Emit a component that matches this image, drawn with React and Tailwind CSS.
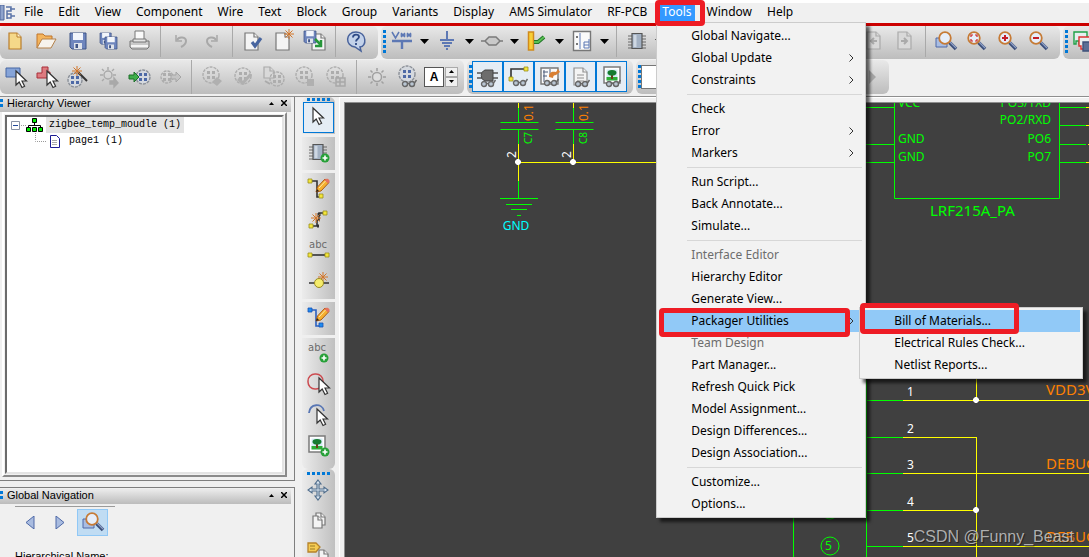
import clsx from "clsx";

const menuBar = [
  "File", "Edit", "View", "Component", "Wire", "Text", "Block", "Group", "Variants",
  "Display", "AMS Simulator", "RF-PCB", "Tools", "Window", "Help",
];

const toolsMenu = [
  [{ label: "Global Navigate..." }, { label: "Global Update", sub: true }, { label: "Constraints", sub: true }],
  [{ label: "Check" }, { label: "Error", sub: true }, { label: "Markers", sub: true }],
  [{ label: "Run Script..." }, { label: "Back Annotate..." }, { label: "Simulate..." }],
  [
    { label: "Interface Editor", disabled: true },
    { label: "Hierarchy Editor" },
    { label: "Generate View..." },
    { label: "Packager Utilities", sub: true, open: true },
    { label: "Team Design", disabled: true },
    { label: "Part Manager..." },
    { label: "Refresh Quick Pick" },
    { label: "Model Assignment..." },
    { label: "Design Differences..." },
    { label: "Design Association..." },
  ],
  [{ label: "Customize..." }, { label: "Options..." }],
];

const packagerMenu = ["Bill of Materials...", "Electrical Rules Check...", "Netlist Reports..."];

/* ---------- icon parts ---------- */

const Cursor = ({ x = 0, y = 0 }) => (
  <path
    transform={`translate(${x} ${y})`}
    d="M0 0v14l3.200-3 2.800 5.500 2.600-1.200L6 10h4.500z"
    fill="#fff"
    stroke="#333"
    strokeWidth="1.200"
  />
);

const Glasses = ({ x = 0, y = 0 }) => (
  <g transform={`translate(${x} ${y})`} fill="#b9c6d3" stroke="#666" strokeWidth="1.4">
    <circle cx="3" cy="4" r="2.500" />
    <circle cx="10" cy="4" r="2.500" />
    <path d="M5.500 3.500h2M12.500 3l2-3" fill="none" />
  </g>
);

const Plus = ({ x, y }) => (
  <g>
    <circle cx={x} cy={y} r="4.500" fill="#27a038" />
    <path d={`M${x - 2.5} ${y}h5M${x} ${y - 2.5}v5`} stroke="#fff" strokeWidth="1.600" />
  </g>
);

const Star = ({ x, y }) => (
  <path
    transform={`translate(${x} ${y})`}
    d="M0-5v10M-5 0H5M-3.500-3.500l7 7M3.500-3.500l-7 7"
    stroke="#d2762a"
    strokeWidth="1"
  />
);

const Floppy = ({ x, y, s = 1 }) => (
  <g transform={`translate(${x} ${y}) scale(${s})`}>
    <path d="M0 0h16v16H2l-2-2z" fill="#6f86bd" stroke="#3f5487" />
    <path d="M3 0h10v7H3z" fill="#f2f5fb" />
    <path d="M4 10h8v6H4z" fill="#dfe3ea" />
    <path d="M5.500 11h2.500v4H5.500z" fill="#3f5487" />
  </g>
);

const Net = ({ x = 12, y = 12, r = 8, off }) => (
  <g transform={`translate(${x} ${y})`}>
    <circle r={r} fill={off ? "none" : "#d5d9df"} stroke={off ? "#adadad" : "#8a8f97"} strokeWidth="1.400" strokeDasharray="3 1" />
    <path d="M-4-4h3v3h-3zM1-4h3v3H1zM-4 1h3v3h-3zM1 1h3v3H1z" fill={off ? "#adadad" : "#4d69a6"} />
  </g>
);

const Pencil = ({ x, y }) => (
  <g transform={`translate(${x} ${y})`}>
    <path d="M0 13l1.500-5L9 0l4 3.500L5 12z" fill="#f6b02e" stroke="#a85a16" />
    <path d="M8 1l4 3.500L13.500 3c.8-2-2-4.200-3.500-3z" fill="#e4725e" />
    <path d="M0 13l1-3 2 2z" fill="#222" />
    <path d="M3 9l6.500-7" stroke="#fde9a8" />
  </g>
);

const Tree = ({ x, y }) => (
  <g transform={`translate(${x} ${y})`}>
    <path d="M0 0h16v16H0z" fill="#fff" stroke="#7b7b7b" strokeWidth="1.500" />
    <path d="M2.500 2.500h11v11h-11z" fill="#d3ebf4" />
    <path d="M2.500 10h11v3.500h-11z" fill="#2cae36" />
    <path d="M7 7h2v5H7z" fill="#6b3f19" />
    <ellipse cx="8" cy="5.800" rx="4.500" ry="2.800" fill="#157b30" />
  </g>
);

const Chip = ({ x = 3, y = 4 }) => (
  <g transform={`translate(${x} ${y})`}>
    <path d="M0 3h18M0 6h18M0 9h18M0 12h18M0 15h18" stroke="#6a6a6a" strokeWidth="1.200" />
    <path d="M4 .5h10v15H4z" fill="#a3b1c3" stroke="#555" strokeWidth="1.200" />
    <path d="M5.500 2h3v12h-3z" fill="#dfe7f0" opacity=".7" />
  </g>
);

const Lens = ({ x = 9, y = 9, children }) => (
  <g transform={`translate(${x} ${y})`}>
    <path d="M4.500 4.500l6.500 6.500" stroke="#3c4f7a" strokeWidth="3.600" />
    <path d="M5 4l6 6" stroke="#8fa0c6" strokeWidth="1.200" />
    <circle r="5.800" fill="#e6eefa" stroke="#c67b36" strokeWidth="1.800" />
    {children}
  </g>
);

const Sheet = ({ x = 5, y = 3, w = 13, h = 17, stroke = "#777", fill = "#f4f4f4", lines }) => (
  <g transform={`translate(${x} ${y})`} fill={fill} stroke={stroke} strokeWidth="1.200">
    <path d={`M0 0H${w - 4}L${w} 4V${h}H0z`} />
    <path d={`M${w - 4} 0v4H${w}`} />
    {lines && <path d={`M3 7h${w - 6}M3 10h${w - 6}M3 13h${w - 6}`} />}
  </g>
);

const Flex = ({ d, stroke = "#333", ends, fill = "#f3e53a", edge = "#9a8f1c" }) => (
  <g>
    <path d={d} fill="none" stroke={stroke} strokeWidth="1.600" />
    {ends.map(([x, y]) => (
      <path key={`${x},${y}`} d={`M${x} ${y}h4v4h-4z`} fill={fill} stroke={edge} strokeWidth=".800" />
    ))}
  </g>
);

/* ---------- icons, all on a 24px grid ---------- */

const icons = {
  newFile: (
    <g>
      <path d="M5 4h8l4 4v12H5z" fill="#f5d889" stroke="#b97d2b" strokeWidth="1.200" />
      <path d="M13 4v4h4" fill="#fff3cf" stroke="#b97d2b" />
    </g>
  ),
  open: (
    <g stroke="#c0752a" strokeLinejoin="round">
      <path d="M2 19V5h6l2 2h7v5" fill="#f4b45c" />
      <path d="M2 19L7 10h14l-5 9z" fill="#f7f3ec" stroke="#b4814a" />
    </g>
  ),
  save: <Floppy x={4} y={4} />,
  saveAll: (
    <g>
      <Floppy x={3} y={4} s={0.7} />
      <Floppy x={8} y={8} s={0.75} />
    </g>
  ),
  print: (
    <g stroke="#777">
      <path d="M7 2h9v11H7z" fill="#fafafa" />
      <path d="M2 12h19v6l-2 2H4l-2-2z" fill="#c9c9c9" />
      <path d="M5 10h13v3H5z" fill="#e4e4e4" />
      <path d="M3 17h17" stroke="#f4f4f4" strokeWidth="2" />
    </g>
  ),
  undo: (
    <g fill="none" stroke="#a8a8a8">
      <path d="M7 6v6h6" strokeWidth="1.500" />
      <path d="M8 11c2-4 9-3 9 1 0 3-3 5-5 6" strokeWidth="2" />
    </g>
  ),
  redo: (
    <g fill="none" stroke="#a8a8a8">
      <path d="M17 6v6h-6" strokeWidth="1.500" />
      <path d="M16 11c-2-4-9-3-9 1 0 3 3 5 5 6" strokeWidth="2" />
    </g>
  ),
  docCheck: (
    <g>
      <Sheet x={4} y={4} />
      <path d="M11 13l3 4 6-8" fill="none" stroke="#47659f" strokeWidth="3.200" />
    </g>
  ),
  docNew: (
    <g>
      <Sheet x={4} y={4} />
      <Star x={17} y={5} />
    </g>
  ),
  docSave: (
    <g>
      <Sheet x={9} y={5} w={13} h={16} />
      <Floppy x={1} y={2} s={0.75} />
      <path d="M12 10l6 6M18 11v6h-6" fill="none" stroke="#27963a" strokeWidth="2.500" />
    </g>
  ),
  help: (
    <g>
      <path d="M12 3c11 0 11 15 4 15l1 4-6-4C1 17 1 3 12 3z" fill="#c3d2ea" stroke="#48629b" strokeWidth="1.500" />
      <path d="M9 8.500c0-4 6-3.500 6-.5 0 2-3 2-3 4.500M12 14v2" fill="none" stroke="#2e4a86" strokeWidth="1.800" />
    </g>
  ),
  vcc: (
    <g stroke="#5d78b4" fill="none" strokeWidth="1.500">
      <path d="M2 3l3.500 6L9 3M11 4l4 4M15 4l-4 4M17 4l4 4M21 4l-4 4M10.500 6h5M16.500 6h5" />
      <path d="M2 12h20M12 12v8" strokeWidth="2.400" />
    </g>
  ),
  ground: <path d="M12 2v9M5 11h14M7 14h10M9 17h6M11 20h2" stroke="#5d78b4" strokeWidth="2" />,
  port: <path d="M1 12h4M19 12h4M5 12l4-4h7l4 4-4 4H9z" fill="#c9c9c9" stroke="#7a7a7a" strokeWidth="1.500" />,
  pin: (
    <g>
      <path d="M3.500 3h5v18h-5z" fill="#f8cf36" stroke="#d08a1c" strokeWidth="1.500" />
      <path d="M9 13h4l6-5" fill="none" stroke="#22762a" strokeWidth="4" />
      <path d="M9 13h4l6-5" fill="none" stroke="#5ac153" strokeWidth="1.800" />
    </g>
  ),
  sheet: (
    <g>
      <path d="M3.500 2.500h17v19h-17z" fill="#fafafa" stroke="#777" strokeWidth="1.400" />
      <path d="M10 4v16M14 13h5M14 16h5M14 13v6M19 10v9h-5" fill="none" stroke="#5d78b4" />
      <path d="M6 7h2v2H6zM6 14h2v2H6z" fill="#777" />
    </g>
  ),
  chip: <Chip />,
  docPrev: (
    <g>
      <Sheet stroke="#aaa" fill="#d9d9d9" />
      <path d="M15 12H9m3-3l-3 3 3 3" fill="none" stroke="#aaa" strokeWidth="2" />
    </g>
  ),
  docNext: (
    <g>
      <Sheet stroke="#aaa" fill="#d9d9d9" />
      <path d="M8 12h6m-3-3l3 3-3 3" fill="none" stroke="#aaa" strokeWidth="2" />
    </g>
  ),
  zoomArea: (
    <g>
      <path d="M2 9h11v9H2z" fill="#a9bde2" stroke="#4e69a7" />
      <Lens x={11} y={9} />
    </g>
  ),
  zoomFit: (
    <Lens>
      <path d="M-3-1v-2h2M1-3h2v2M3 1v2H1M-1 3h-2V1" fill="none" stroke="#c22" strokeWidth="1.200" />
    </Lens>
  ),
  zoomIn: (
    <Lens>
      <path d="M-3 0h6M0-3v6" stroke="#c41e28" strokeWidth="2" />
    </Lens>
  ),
  zoomOut: (
    <Lens>
      <path d="M-3 0h6" stroke="#c41e28" strokeWidth="2" />
    </Lens>
  ),
  layers: (
    <g fill="#e8eef0" strokeWidth="1.400">
      <path d="M2 3h13v9h-5v3H7v-3H4v3H2z" stroke="#1fa147" />
      <path d="M7 8h13v9h-8v3H9v-3H7z" stroke="#d33" />
      <path d="M11 13h12v9H11z" fill="#5c6f96" stroke="#3e5079" />
    </g>
  ),
  selectRect: (
    <g>
      <path d="M2 3h14v9H2z" fill="#86a4d8" stroke="#4767a3" />
      <Cursor x={12} y={6} />
    </g>
  ),
  selectShape: (
    <g>
      <path d="M7 2h6v5h2v6H2V8h5z" fill="#de7b80" stroke="#a92e38" />
      <Cursor x={12} y={6} />
    </g>
  ),
  wand: (
    <g>
      <Net x={9} y={15} r={7} />
      <path d="M12 7l9 9" stroke="#333" strokeWidth="2" />
      <Star x={11} y={6} />
    </g>
  ),
  sunOff: (
    <g fill="none" stroke="#a9a9a9" strokeWidth="1.400">
      <circle cx="11" cy="10" r="4" />
      <path d="M11 2v3M3 10h3M5 4l2 2M17 4l-2 2M5 16l2-2M19 10h-3" />
      <path d="M13 16h4v-3l4 5-4 4v-3h-4z" fill="#a9a9a9" />
    </g>
  ),
  netIn: (
    <g>
      <Net x={15} y={12} r={7} />
      <path d="M1 10h5V7l5 5-5 5v-3H1z" fill="#3fae4b" stroke="#1e6f2b" />
    </g>
  ),
  netOut: (
    <g>
      <Net x={8} y={12} r={6} off />
      <path d="M12 10h5V7l5 5-5 5v-3h-5z" fill="#c4c4c4" stroke="#a5a5a5" />
    </g>
  ),
  netPen: (
    <g>
      <Net x={11} y={10} off />
      <path d="M12 17l5-5 5 4-5 5z" fill="#b0b0b0" />
    </g>
  ),
  netCheck: (
    <g>
      <Net x={12} y={11} r={8} off />
      <path d="M7 14l5 4 8-9" fill="none" stroke="#b0b0b0" strokeWidth="3" />
    </g>
  ),
  netDoc: (
    <g>
      <Sheet x={2} y={2} w={10} h={11} stroke="#aaa" fill="#d9d9d9" />
      <Net x={15} y={14} r={7} off />
      <path d="M3 16l5 3" stroke="#aaa" strokeWidth="2" />
    </g>
  ),
  netBox: (
    <g>
      <Net x={11} y={10} off />
      <path d="M14 14h7v7h-7z" fill="#b0b0b0" />
    </g>
  ),
  netGrid: (
    <g>
      <Net x={11} y={10} off />
      <path d="M12 13h9v8h-9zM12 17h9M16 13v8" fill="#c9c9c9" stroke="#a8a8a8" strokeWidth="1.500" />
    </g>
  ),
  sun: (
    <g fill="none" stroke="#a0a0a0" strokeWidth="1.500">
      <circle cx="12" cy="12" r="4.500" fill="#dedede" />
      <path d="M12 3v3M12 18v3M3 12h3M18 12h3M5.500 5.500l2 2M16.500 16.500l2 2M18.500 5.500l-2 2M7.500 16.500l-2 2" />
    </g>
  ),
  netView: (
    <g>
      <Net x={11} y={9} />
      <Glasses x={6} y={15} />
    </g>
  ),
  viewChip: (
    <g>
      <path d="M1 8h5M1 13h5M17 8h5M17 13h5" stroke="#555" strokeWidth="1.500" />
      <path d="M9 5h8v11H9c-5-2-5-9 0-11z" fill="#6d6d6d" stroke="#444" />
      <Glasses x={5} y={15} />
    </g>
  ),
  viewWire: (
    <g>
      <Flex d="M4 13V4h14" ends={[[2, 12], [17, 2]]} />
      <Glasses x={6} y={14} />
    </g>
  ),
  viewSheet: (
    <g>
      <path d="M3 3h17v16H3z" fill="#fafafa" stroke="#777" strokeWidth="1.400" />
      <path d="M5 7h5M5 11h4M6 5v12M12 4v8" stroke="#4c5c7a" />
      <path d="M11 12c0-5 3-6 7-5l2-3 2 3-4 3c-2 0-3 1-3 3z" fill="#d97f32" />
      <Glasses x={6} y={14} />
    </g>
  ),
  viewDoc: (
    <g>
      <Sheet x={5} y={3} lines stroke="#909090" />
      <Glasses x={6} y={15} />
    </g>
  ),
  viewPicture: (
    <g>
      <Tree x={4} y={2} />
      <Glasses x={6} y={15} />
    </g>
  ),
  pointer: <Cursor x={6} y={3} />,
  addChip: (
    <g>
      <Chip x={2} y={3} />
      <Plus x={18} y={17} />
    </g>
  ),
  drawWire: (
    <g>
      <Flex d="M5 4h5v16h4" ends={[[1, 2], [12, 17]]} />
      <Pencil x={9} y={2} />
    </g>
  ),
  routeWire: (
    <g>
      <Flex d="M5 18h5v-6h2V5h7" ends={[[2, 16], [16, 3]]} />
      <path d="M12 5v3M10 18h2" stroke="#333" strokeWidth="3" />
      <Star x={9} y={10} />
    </g>
  ),
  netName: (
    <g>
      <text x="2" y="9" fontSize="10" fontFamily="DejaVu Sans" fill="#6b6b6b">abc</text>
      <Flex d="M4 16h16" ends={[[1, 14], [18, 14]]} />
    </g>
  ),
  dot: (
    <g>
      <path d="M2 13h20" stroke="#333" strokeWidth="1.500" />
      <Star x={16} y={7} />
      <circle cx="12" cy="13" r="4.500" fill="#f5ec6b" stroke="#9a8a22" />
    </g>
  ),
  drawBus: (
    <g>
      <Flex d="M5 4h4v16h4" stroke="#2b5fc0" ends={[[1, 2], [12, 17]]} fill="#1e8cf0" edge="#1750b5" />
      <Pencil x={9} y={2} />
    </g>
  ),
  addText: (
    <g>
      <text x="1" y="9" fontSize="10" fontFamily="DejaVu Sans" fill="#6b6b6b">abc</text>
      <Plus x={17} y={16} />
    </g>
  ),
  circle: (
    <g>
      <rect x="1" y="1" width="15" height="15" rx="7" fill="none" stroke="#cc4b50" strokeWidth="1.500" />
      <Cursor x={12} y={5} />
    </g>
  ),
  arc: (
    <g>
      <path d="M2 9C3-1 15-1 17 7" fill="none" stroke="#5876b4" strokeWidth="1.800" />
      <Cursor x={10} y={5} />
    </g>
  ),
  addPicture: (
    <g>
      <Tree x={2} y={1} />
      <Plus x={18} y={17} />
    </g>
  ),
  move: (
    <path
      d="M11 2l3 4h-2v5h5V9l4 3-4 3v-2h-5v5h2l-3 4-3-4h2v-5H5v2l-4-3 4-3v2h5V6H8z"
      fill="#dbe6f0"
      stroke="#4e6c8b"
      strokeWidth="1.100"
    />
  ),
  copy: (
    <g>
      <Sheet x={9} y={4} w={9} h={12} />
      <Sheet x={6} y={7} w={9} h={12} />
    </g>
  ),
  tag: (
    <g>
      <path d="M1 3h8l4 4-4 5H1z" fill="#f5cb52" stroke="#b5832a" strokeWidth="1.300" />
      <path d="M3 6h5M3 9h5" stroke="#9b7d26" />
      <Sheet x={12} y={10} w={9} h={14} />
    </g>
  ),
};

const Icon = ({ name }) => (
  <svg className="size-6 shrink-0" viewBox="0 0 24 24" fill="none" aria-hidden="true">
    {icons[name]}
  </svg>
);

/* ---------- toolbar pieces ---------- */

const Tool = ({ name, active, className }) => (
  <button
    type="button"
    aria-label={name}
    className={clsx(
      "flex h-[31px] w-[31px] shrink-0 items-center justify-center overflow-hidden",
      active && "border border-[#0078d7] bg-[#e5edf5]",
      className
    )}
  >
    <Icon name={name} />
  </button>
);

const Tools = ({ names, active }) => names.map((name) => <Tool key={name} name={name} active={active} />);

const ToolWithCaret = ({ name }) => (
  <div className="flex items-center">
    <Tool name={name} />
    <button type="button" aria-label={`${name} options`} className="flex w-[14px] justify-center">
      <svg width="9" height="5" viewBox="0 0 9 5"><path d="M0 0h9L4.500 5z" /></svg>
    </button>
  </div>
);

const Separator = () => (
  <div className="flex w-[10px] shrink-0 justify-center self-stretch">
    <div className="w-px bg-[#a9a9a9]" />
  </div>
);

const Grip = () => (
  <div className="h-[23px] w-[3px] shrink-0 bg-[repeating-linear-gradient(180deg,#0078d7_0_3px,transparent_3px_5px)]" />
);

const Band = ({ className, children }) => (
  <div
    className={clsx(
      "flex shrink-0 items-center rounded-md bg-linear-to-b from-[#e9e9e9] to-[#bdbdbd]",
      className
    )}
  >
    {children}
  </div>
);

const Marker = ({ className }) => (
  <span className={clsx("pointer-events-none absolute z-10 rounded-sm border-[5px] border-[#ee1c25]", className)} />
);

const menuRow = "relative flex h-[22px] w-full items-center pl-[32px] text-left";

const PackagerMenu = () => (
  <div className="absolute -top-[3px] left-[200px] z-10 w-[224px] border border-[#ccc] bg-[#f2f2f2] p-[2px] shadow-[4px_4px_3px_rgba(0,0,0,0.6)]">
    {packagerMenu.map((label, i) => (
      <button key={label} type="button" className={clsx(menuRow, i === 0 && "bg-[#91c9f7]")}>
        {label}
        {i === 0 && <Marker className="-top-[7px] -left-[2px] h-[31px] w-[159px]" />}
      </button>
    ))}
  </div>
);

const ToolsMenu = () => (
  <div className="absolute top-[19px] left-px w-[210px] border border-[#ccc] bg-[#f2f2f2] p-[2px] shadow-[4px_4px_3px_rgba(0,0,0,0.6)]">
    {toolsMenu.map((group, i) => (
      <div key={group[0].label}>
        {i > 0 && <hr className="my-[3px] mr-[1px] ml-[28px] border-[#d7d7d7]" />}
        {group.map((item) => (
          <div key={item.label} className="relative">
            <button
              type="button"
              disabled={item.disabled}
              className={clsx(menuRow, item.disabled && "text-[#6d6d6d]", item.open && "bg-[#91c9f7]")}
            >
              {item.label}
              {item.sub && (
                <svg className="absolute right-[9px]" width="5" height="8" viewBox="0 0 5 8" fill="none" stroke="#333">
                  <path d="M.5.5L4 4 .5 7.500" />
                </svg>
              )}
            </button>
            {item.open && <Marker className="-top-[2px] left-0 h-[29px] w-[191px]" />}
            {item.open && <PackagerMenu />}
          </div>
        ))}
      </div>
    ))}
  </div>
);

const MenuBar = () => (
  <nav className="relative z-30 flex h-[26px] items-start border-t-3 border-b-3 border-t-white border-b-[#cc0000] bg-[#f0f0f0] text-[12px]">
    <svg className="mt-[2px] mr-[2px] shrink-0" width="15" height="16" viewBox="0 0 15 16">
      <path d="M0 0h4v15H0z" fill="#8ea3cc" stroke="#4e669b" />
      <path d="M6 2h5v4H7v8M10 4h5M7 9h4v4H7M11 11h4" fill="none" stroke="#5b74a8" strokeWidth="1.500" />
    </svg>
    {menuBar.map((label) => (
      <div key={label} className="relative">
        <button
          type="button"
          className={clsx(
            "mr-[5px] ml-[4px] h-[19px] px-[3px] pb-[2px] whitespace-nowrap",
            label === "Tools" && "bg-[#3399ff] text-white"
          )}
        >
          {label}
        </button>
        {label === "Tools" && (
          <>
            <ToolsMenu />
            <Marker className="-top-[3px] left-0 h-[26px] w-[50px]" />
          </>
        )}
      </div>
    ))}
  </nav>
);

const Toolbars = () => (
  <div className="border-b border-[#8e8e8e] bg-[#f0f0f0] pb-[2px]">
    <div className="flex h-[33px]">
      <Band className="mr-[3px] w-[378px] pb-[2px]">
        <Tools names={["newFile", "open", "save", "saveAll", "print"]} />
        <Separator />
        <Tools names={["undo", "redo"]} />
        <Separator />
        <Tools names={["docCheck", "docNew", "docSave"]} />
        <Separator />
        <Tools names={["help"]} />
      </Band>
      <Band className="w-[679px] pb-[2px] pl-[2px]">
        <Grip />
        {["vcc", "ground", "port", "pin", "sheet"].map((name) => (
          <ToolWithCaret key={name} name={name} />
        ))}
        <Separator />
        <ToolWithCaret name="chip" />
        <div className="grow" />
        <Tools names={["docPrev", "docNext"]} />
        <Separator />
        <Tools names={["zoomArea", "zoomFit", "zoomIn", "zoomOut"]} />
        <div className="w-[6px]" />
      </Band>
      <Band className="ml-[3px] grow pb-[2px] pl-[2px]">
        <Grip />
        <Tool name="layers" />
      </Band>
    </div>
    <div className="mt-px flex h-[34px]">
      <Band className="w-[464px]">
        <Tools names={["selectRect", "selectShape", "wand", "sunOff", "netIn", "netOut"]} />
        <Separator />
        <Tools names={["netPen", "netCheck", "netDoc", "netBox", "netGrid"]} />
        <Separator />
        <Tools names={["sun", "netView"]} />
        <input
          aria-label="Text size"
          defaultValue="A"
          className="ml-px h-[20px] w-[20px] shrink-0 border border-[#555] bg-white text-center font-['Liberation_Sans'] text-[12px] font-bold"
        />
        <div className="ml-px flex flex-col">
          {["M0 3h5L2.500 0z", "M0 0h5L2.500 3z"].map((d, i) => (
            <button
              key={d}
              type="button"
              aria-label={i ? "Smaller" : "Larger"}
              className="flex h-[10px] w-[13px] items-center justify-center border border-[#aaa] bg-[#f0f0f0]"
            >
              <svg width="5" height="3" viewBox="0 0 5 3"><path d={d} /></svg>
            </button>
          ))}
        </div>
      </Band>
      <Band className="ml-[3px] w-[166px] pl-[2px]">
        <Grip />
        <Tools active names={["viewChip", "viewWire", "viewSheet", "viewDoc", "viewPicture"]} />
      </Band>
      <Band className="ml-[3px] w-[253px] pl-[2px]">
        <Grip />
        <input aria-label="Find" className="h-[24px] w-[180px] border border-[#777] bg-white" />
        <svg className="ml-auto mr-[13px]" width="7" height="14" viewBox="0 0 7 14">
          <path d="M0 0l7 7-7 7z" fill="#a5a5a5" />
        </svg>
      </Band>
    </div>
  </div>
);

/* ---------- left docks ---------- */

const DockTitle = ({ children }) => (
  <div className="mr-[2px] flex h-[15px] items-center bg-linear-to-b from-[#ececec] to-[#bcbcbc] pb-[2px] font-['Liberation_Sans'] text-[11px]">
    <div className="h-[8px] w-[3px] bg-[repeating-linear-gradient(180deg,#0078d7_0_3px,transparent_3px_5px)]" />
    <h2 className="ml-[4px] grow">{children}</h2>
    <button type="button" aria-label="Collapse" className="mr-[7px]">
      <svg width="5" height="3" viewBox="0 0 5 3"><path d="M0 3h5L2.500 0z" /></svg>
    </button>
    <button type="button" aria-label="Close" className="mr-[4px]">
      <svg width="6" height="6" viewBox="0 0 6 6"><path d="M0 0l6 6M6 0L0 6" stroke="#000" strokeWidth="1.500" /></svg>
    </button>
  </div>
);

const HierarchyTree = () => (
  <ul className="font-['Liberation_Mono'] text-[10px] leading-4">
    <li>
      <div className="flex items-center">
        <svg className="mr-[3px]" width="36" height="16" viewBox="0 0 36 16">
          <path d="M4.500 4.500h8v8h-8z" fill="#fff" stroke="#8a93a5" />
          <path d="M6 8.500h5" stroke="#234a9c" />
          <path d="M14 8.500h5" stroke="#999" strokeDasharray="1 1" />
          <path d="M27.500 5v4M21.500 11V8.500h12V11" fill="none" stroke="#000" />
          <path d="M25.500 1.500h4v4h-4z" fill="#0e0" stroke="#000" />
          <path d="M19.500 10.500h4v4h-4zM25.500 10.500h4v4h-4zM31.500 10.500h4v4h-4z" fill="#0e0" stroke="#000" />
        </svg>
        <span className="bg-[#e3e3e3] pr-[3px] pl-[3px]">zigbee_temp_moudle (1)</span>
      </div>
      <ul>
        <li className="flex items-center">
          <svg className="mr-[8px] ml-[28px]" width="26" height="16" viewBox="0 0 26 16">
            <path d="M.500 0v8.500H12" fill="none" stroke="#999" strokeDasharray="1 1" />
            <path d="M15.500 2.500h6l3 3v9h-9z" fill="#fff" stroke="#1c1c94" />
            <path d="M17 7.500h5M17 9.500h5M17 11.500h5" stroke="#aaa" />
          </svg>
          page1 (1)
        </li>
      </ul>
    </li>
  </ul>
);

const Docks = () => (
  <aside className="flex w-[295px] shrink-0 flex-col">
    <section className="flex h-[384px] shrink-0 flex-col border-r border-b border-[#7f7f7f] pr-px">
      <DockTitle>Hierarchy Viewer</DockTitle>
      <div className="mr-[6px] mb-[3px] ml-[2px] grow border-2 border-t-[#fff] border-r-[#8a8a8a] border-b-[#8a8a8a] border-l-[#fff] bg-[#f0f0f0] p-px">
        <div className="h-full border-2 border-t-[#6b6b6b] border-r-[#e3e3e3] border-b-[#e3e3e3] border-l-[#6b6b6b] bg-white">
          <HierarchyTree />
        </div>
      </div>
    </section>
    <section className="mt-[6px] flex grow flex-col border-t border-r border-[#7f7f7f] pt-px pr-px">
      <DockTitle>Global Navigation</DockTitle>
      <div className="mt-[2px] ml-[15px] w-[100px] border-t border-[#9b9b9b] pt-[2px]">
        <div className="flex h-[27px] items-center">
          {["M9 0v13L1 6.500z", "M1 0v13l8-6.500z"].map((d, i) => (
            <button key={d} type="button" aria-label={i ? "Forward" : "Back"} className="flex w-[30px] justify-center">
              <svg width="10" height="13" viewBox="0 0 10 13"><path d={d} fill="#a9bce0" stroke="#4e69a7" /></svg>
            </button>
          ))}
          <button type="button" aria-label="Zoom to object" className="ml-[2px] flex h-[27px] w-[31px] items-center justify-center border border-[#90c8f6] bg-[#c0dcf3]">
            <Icon name="zoomArea" />
          </button>
        </div>
      </div>
      <p className="mt-[12px] ml-[15px] font-['Liberation_Sans'] text-[11px]">Hierarchical Name:</p>
    </section>
  </aside>
);

const palette = [
  ["addChip"],
  ["drawWire", "routeWire", "netName", "dot"],
  ["drawBus"],
  ["addText", "circle", "arc", "addPicture"],
];

const DotRow = () => (
  <div className="h-[3px] w-[23px] shrink-0 bg-[repeating-linear-gradient(90deg,#0078d7_0_3px,transparent_3px_5px)]" />
);

const Palette = () => (
  <div className="ml-[7px] flex w-[33px] shrink-0 flex-col overflow-hidden">
    <div className="flex shrink-0 flex-col items-center rounded-md bg-linear-to-r from-[#ececec] to-[#c0c0c0] pt-px pb-[6px]">
      <DotRow />
      <Tool name="pointer" active className="mt-px" />
      {palette.map((group) => (
        <div key={group[0]} className="w-full">
          <div className="my-px h-[3px] bg-[#efefef]" />
          {group.map((name) => (
            <Tool key={name} name={name} className="mx-auto" />
          ))}
        </div>
      ))}
    </div>
    <div className="flex grow flex-col items-center rounded-md bg-linear-to-r from-[#ececec] to-[#c0c0c0] pt-[3px]">
      <DotRow />
      <Tools names={["move", "copy", "tag"]} />
    </div>
  </div>
);

/* ---------- schematic ---------- */

const Capacitor = ({ x, refdes }) => (
  <g>
    <path d={`M${x} 100v8M${x} 144v18`} stroke="#ff0" />
    <path d={`M${x} 108v14M${x - 18} 122.500h38M${x - 18} 129.500h38M${x} 129v15`} stroke="#0f0" />
    <text transform={`translate(${x + 14} 121) rotate(-90)`} fontSize="12" fill="#ff8000">0.1u</text>
    <text transform={`translate(${x + 13} 144) rotate(-90)`} fontSize="10" fill="#0f0">{refdes}</text>
    <text transform={`translate(${x - 3} 158) rotate(-90)`} fontSize="12" fill="#fff">2</text>
  </g>
);

const Junction = ({ x, y }) => (
  <path d={`M${x - 1} ${y - 3}h2l2 2v2l-2 2h-2l-2-2v-2z`} fill="#fff" />
);

const connectorPins = [
  { n: 1, y: 400, to: 1400 },
  { n: 2, y: 437, to: 977 },
  { n: 3, y: 473, to: 1400 },
  { n: 4, y: 510, to: 977 },
  { n: 5, y: 546, to: 1400 },
];

const Schematic = () => (
  <svg className="absolute inset-0 h-full w-full" fontFamily="'Noto Sans', sans-serif" fill="none">
    <g transform="translate(-345 -103)">
      <Capacitor x={518.5} refdes="C7" />
      <Capacitor x={573.5} refdes="C8" />
      <path d="M518 162.500h160M518.500 162v19" stroke="#ff0" />
      <path d="M518.500 181v17M500 198.500h38M506 204.500h26M511 209.500h16M517 215.500h4" stroke="#0f0" />
      <Junction x={518} y={162} />
      <Junction x={573} y={162} />
      <text x="516" y="230" fontSize="12" textAnchor="middle" fill="#0ff">GND</text>

      <path d="M894.500 100v98.500h165V100M866 107.500h28M866 144.500h28M866 162.500h28M1060 107.500h26M1060 125.500h26M1060 144.500h26M1060 162.500h26" stroke="#0f0" />
      <path d="M1086 107.500h300M1086 125.500h300M1088 144.500h300M1086 162.500h300" stroke="#ff0" />
      <g fontSize="12" fill="#0f0">
        <text x="898" y="107">VCC</text>
        <text x="898" y="143">GND</text>
        <text x="898" y="161">GND</text>
        <g textAnchor="end">
          <text x="1051" y="107">PO3/TXD</text>
          <text x="1051" y="124">PO2/RXD</text>
          <text x="1051" y="143">PO6</text>
          <text x="1051" y="161">PO7</text>
        </g>
        <text x="930" y="216" fontSize="15">LRF215A_PA</text>
      </g>

      <path d="M793.500 380v300M866.500 380v300" stroke="#0f0" />
      <path d="M976.500 370v30M976.500 437v240" stroke="#ff0" />
      {connectorPins.map(({ n, y, to }) => (
        <g key={n}>
          <path d={`M867 ${y + 0.5}h36`} stroke="#0f0" />
          <path d={`M903 ${y + 0.5}H${to}`} stroke="#ff0" />
          <text x="907" y={y - 4} fontSize="12" fill="#fff">{n}</text>
          <circle cx="830" cy={y} r="9" stroke="#0f0" />
        </g>
      ))}
      <text x="825" y="550" fontSize="12" fill="#0f0">5</text>
      <Junction x={976} y={400} />
      <Junction x={976} y={510} />
      <g fontSize="15" fill="#ff8000">
        <text x="1046" y="395">VDD3V3</text>
        <text x="1046" y="469">DEBUG</text>
        <text x="1046" y="542">DEBUG</text>
      </g>
    </g>
  </svg>
);

export default function App() {
  return (
    <div className="flex h-screen flex-col overflow-hidden bg-[#f0f0f0] font-['Noto_Sans',sans-serif] text-black">
      <MenuBar />
      <Toolbars />
      <main className="flex min-h-0 grow">
        <Docks />
        <Palette />
        <div className="ml-[4px] flex min-w-0 grow border-t border-l border-white pt-[4px] pl-[4px]">
          <div className="relative grow overflow-hidden border-t border-l border-[#8e8e8e] bg-[#404040]">
            <Schematic />
            <span className="absolute right-[15px] bottom-[8px] font-['Liberation_Sans'] text-[16px] text-[#d0d0d0]/80 [text-shadow:1px_1px_1px_#222]">
              CSDN @Funny_Beast
            </span>
          </div>
        </div>
      </main>
    </div>
  );
}
